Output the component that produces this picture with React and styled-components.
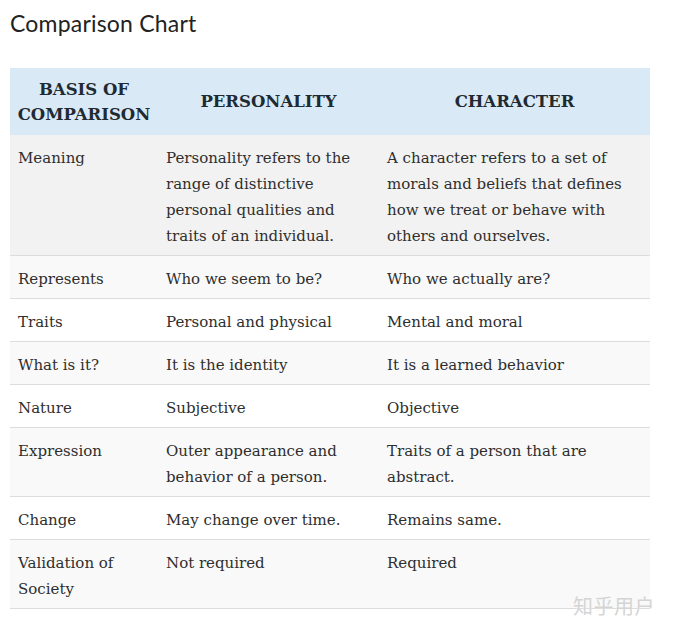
import React from "react";
import styled, { createGlobalStyle } from "styled-components";

const Global = createGlobalStyle`
  html, body { margin: 0; padding: 0; background: #fff; }
  body { width: 673px; height: 633px; overflow: hidden; }
`;

const Page = styled.div`
  position: relative;
  width: 673px;
  height: 633px;
  padding: 0 23px 0 10px;
  box-sizing: border-box;
`;

const Title = styled.h2`
  margin: 0;
  padding-top: 9px;
  font-family: "Lato", "Open Sans", sans-serif;
  font-weight: 400;
  font-size: 23px;
  line-height: 28px;
  color: #222;
  letter-spacing: 0.2px;
`;

const Table = styled.table`
  margin-top: 31px;
  width: 640px;
  border-collapse: collapse;
  table-layout: fixed;
  font-family: "DejaVu Serif", "Liberation Serif", serif;
  font-size: 15px;
  color: #333;
`;

const HeadRow = styled.tr`
  background: #d9eaf6;
`;

const Th = styled.th`
  width: ${(p) => p.$w}px;
  padding: 8px 4px;
  height: 67px;
  box-sizing: border-box;
  text-align: center;
  font-weight: 700;
  font-size: 16.5px;
  line-height: 25px;
  color: #1f2a33;
  text-transform: uppercase;
  vertical-align: middle;
`;

const Row = styled.tr`
  background: ${(p) => p.$bg};
  border-bottom: 1px solid #dcdcdc;
`;

const Td = styled.td`
  padding: 10px 8px 6px 8px;
  line-height: 26px;
  vertical-align: top;
  color: #2e2e2e;
`;

const Watermark = styled.div`
  position: absolute;
  right: 18px;
  bottom: 16px;
  font-family: "Noto Sans CJK SC", sans-serif;
  font-size: 20px;
  line-height: 22px;
  color: #d4d4d4;
  letter-spacing: 0.5px;
  text-shadow: 0 0 1px #fff;
`;

const rows = [
  ["Meaning", "Personality refers to the range of distinctive personal qualities and traits of an individual.", "A character refers to a set of morals and beliefs that defines how we treat or behave with others and ourselves.", "#f2f2f2"],
  ["Represents", "Who we seem to be?", "Who we actually are?", "#f9f9f9"],
  ["Traits", "Personal and physical", "Mental and moral", "#ffffff"],
  ["What is it?", "It is the identity", "It is a learned behavior", "#f9f9f9"],
  ["Nature", "Subjective", "Objective", "#ffffff"],
  ["Expression", "Outer appearance and behavior of a person.", "Traits of a person that are abstract.", "#f9f9f9"],
  ["Change", "May change over time.", "Remains same.", "#ffffff"],
  ["Validation of Society", "Not required", "Required", "#f9f9f9"],
];

export default function App() {
  return (
    <Page>
      <Global />
      <Title>Comparison Chart</Title>
      <Table>
        <thead>
          <HeadRow>
            <Th $w={148}>Basis of Comparison</Th>
            <Th $w={221}>Personality</Th>
            <Th $w={271}>Character</Th>
          </HeadRow>
        </thead>
        <tbody>
          {rows.map(([a, b, c, bg]) => (
            <Row key={a} $bg={bg}>
              <Td>{a}</Td>
              <Td>{b}</Td>
              <Td>{c}</Td>
            </Row>
          ))}
        </tbody>
      </Table>
      <Watermark>知乎用户</Watermark>
    </Page>
  );
}
